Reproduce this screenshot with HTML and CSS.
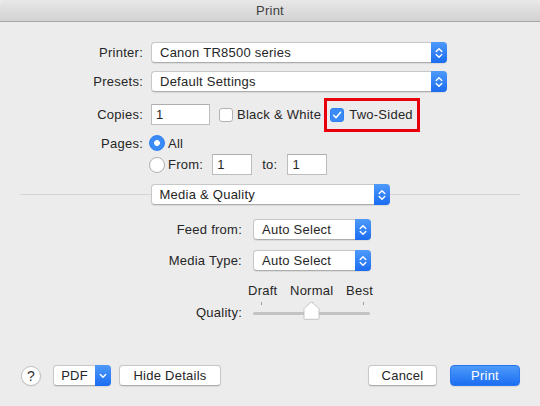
FILE: index.html
```html
<!DOCTYPE html>
<html>
<head>
<meta charset="utf-8">
<link rel="stylesheet" href="styles.css">
</head>
<body>
<div class="window">
  <div class="titlebar">Print</div>
  <div class="content">
    <div class="row">
      <div class="label">Printer:</div>
      <div class="popup w-wide"><span class="val">Canon TR8500 series</span><span class="step"><svg width="8" height="12" viewBox="0 0 8 12"><path d="M1.2 4.6 L4 1.8 L6.8 4.6 M1.2 7.4 L4 10.2 L6.8 7.4" fill="none" stroke="#fff" stroke-width="1.4" stroke-linecap="round" stroke-linejoin="round"/></svg></span></div>
    </div>
    <div class="row mt8">
      <div class="label">Presets:</div>
      <div class="popup w-wide"><span class="val">Default Settings</span><span class="step"><svg width="8" height="12" viewBox="0 0 8 12"><path d="M1.2 4.6 L4 1.8 L6.8 4.6 M1.2 7.4 L4 10.2 L6.8 7.4" fill="none" stroke="#fff" stroke-width="1.4" stroke-linecap="round" stroke-linejoin="round"/></svg></span></div>
    </div>
    <div class="row mt12">
      <div class="label">Copies:</div>
      <div class="field w-copies">1</div>
      <span class="cb"></span><span>Black &amp; White</span>
      <div class="hl">
        <span class="cb on"><svg width="12" height="12" viewBox="0 0 12 12"><path d="M2.6 6.2 L5 8.7 L9.6 3.2" fill="none" stroke="#fff" stroke-width="1.5" stroke-linecap="round" stroke-linejoin="round"/></svg></span><span>Two-Sided</span>
      </div>
    </div>
    <div class="row pages mt8">
      <div class="label">Pages:</div>
      <span class="radio on"></span><span>All</span>
    </div>
    <div class="row mt1">
      <div class="label"></div>
      <span class="radio"></span><span>From:</span>
      <div class="field w-small from">1</div>
      <span class="to">to:</span>
      <div class="field w-small">1</div>
    </div>
    <div class="sep-row">
      <div class="line"></div>
      <div class="popup w-media"><span class="val">Media &amp; Quality</span><span class="step"><svg width="8" height="12" viewBox="0 0 8 12"><path d="M1.2 4.6 L4 1.8 L6.8 4.6 M1.2 7.4 L4 10.2 L6.8 7.4" fill="none" stroke="#fff" stroke-width="1.4" stroke-linecap="round" stroke-linejoin="round"/></svg></span></div>
      <div class="line"></div>
    </div>
    <div class="row mt14">
      <div class="label2">Feed from:</div>
      <div class="popup w-auto"><span class="val">Auto Select</span><span class="step"><svg width="8" height="12" viewBox="0 0 8 12"><path d="M1.2 4.6 L4 1.8 L6.8 4.6 M1.2 7.4 L4 10.2 L6.8 7.4" fill="none" stroke="#fff" stroke-width="1.4" stroke-linecap="round" stroke-linejoin="round"/></svg></span></div>
    </div>
    <div class="row mt10">
      <div class="label2">Media Type:</div>
      <div class="popup w-auto"><span class="val">Auto Select</span><span class="step"><svg width="8" height="12" viewBox="0 0 8 12"><path d="M1.2 4.6 L4 1.8 L6.8 4.6 M1.2 7.4 L4 10.2 L6.8 7.4" fill="none" stroke="#fff" stroke-width="1.4" stroke-linecap="round" stroke-linejoin="round"/></svg></span></div>
    </div>
    <div class="quality">
      <div class="label2 qlabel">Quality:</div>
      <div class="slider">
        <div class="marks"><span>Draft</span><span>Normal</span><span>Best</span></div>
        <div class="track-area">
          <span class="tick t1"></span><span class="tick t2"></span><span class="tick t3"></span>
          <div class="track"></div>
          <svg class="knob" width="19" height="19" viewBox="0 0 19 19"><path d="M2 17.5 L2 8.2 Q2 7.4 2.6 6.9 L8.8 1.4 Q9.5 0.9 10.2 1.4 L16.4 6.9 Q17 7.4 17 8.2 L17 17.5 Q17 18.3 16.2 18.3 L2.8 18.3 Q2 18.3 2 17.5 Z" fill="#fff" stroke="#b9b9b9" stroke-width="0.8"/></svg>
        </div>
      </div>
    </div>
  </div>
  <div class="footer">
    <div class="help">?</div>
    <div class="btn pdf"><span class="pdf-text">PDF</span><span class="pdf-arrow"><svg width="8" height="6" viewBox="0 0 8 6"><path d="M1.3 1.5 L4 4.2 L6.7 1.5" fill="none" stroke="#fff" stroke-width="1.4" stroke-linecap="round" stroke-linejoin="round"/></svg></span></div>
    <div class="btn hide">Hide Details</div>
    <div class="spacer"></div>
    <div class="btn cancel">Cancel</div>
    <div class="btn print">Print</div>
  </div>
</div>
</body>
</html>
```
FILE: styles.css
```css
html, body {
  margin: 0;
  padding: 0;
}
body {
  font-family: "Liberation Sans", Arial, sans-serif;
  font-size: 13px;
  letter-spacing: 0.25px;
  color: #262626;
  background: #ececec;
}
.window {
  width: 540px;
  height: 406px;
  display: flex;
  flex-direction: column;
  background: #ececec;
  overflow: hidden;
}
.titlebar {
  height: 21px;
  flex: none;
  border-bottom: 1px solid #a6a6a6;
  background: linear-gradient(#e8e8e8, #d2d2d2);
  border-radius: 5px 5px 0 0;
  display: flex;
  align-items: center;
  justify-content: center;
  color: #404040;
  font-size: 13px;
}
.content {
  padding-top: 20px;
}
.row {
  display: flex;
  align-items: center;
  height: 21px;
  white-space: nowrap;
}
.mt1 { margin-top: 1px; }
.mt8 { margin-top: 8px; }
.mt10 { margin-top: 10px; }
.mt12 { margin-top: 12px; }
.mt14 { margin-top: 14px; }
.label {
  width: 143px;
  flex: none;
  text-align: right;
  margin-right: 8px;
}
.label2 {
  width: 242px;
  flex: none;
  text-align: right;
  margin-right: 11px;
}
.popup {
  display: flex;
  height: 21px;
  box-sizing: border-box;
  background: #fff;
  border: 1px solid #c8c8c8;
  border-bottom-color: #adadad;
  border-radius: 4px;
  box-shadow: 0 0.5px 1px rgba(0, 0, 0, 0.08);
  flex: none;
}
.popup .val {
  flex: 1;
  padding-left: 8px;
  line-height: 19px;
  white-space: nowrap;
}
.popup .step {
  width: 16px;
  margin: -1px -1px -1px 0;
  background: linear-gradient(#4d9af9, #1b6cf2);
  border-radius: 0 4px 4px 0;
  display: flex;
  align-items: center;
  justify-content: center;
}
.w-wide { width: 296px; }
.w-media { width: 239px; }
.w-auto { width: 118px; }
.field {
  height: 21px;
  box-sizing: border-box;
  border: 1px solid #bdbdbd;
  border-top-color: #aeaeae;
  background: #fff;
  padding-left: 4px;
  line-height: 19px;
  flex: none;
}
.w-copies { width: 59px; margin-right: 9px; }
.w-small { width: 40px; }
.from { margin-left: 9px; }
.to { margin: 0 10px; }
.cb {
  width: 14px;
  height: 14px;
  box-sizing: border-box;
  border: 1px solid #b3b3b3;
  border-radius: 3px;
  background: #fff;
  margin-right: 4px;
  flex: none;
  display: flex;
  align-items: center;
  justify-content: center;
}
.cb.on {
  background: #3a8bf7;
  border-color: #2f80f2;
  margin-right: 5px;
}
.hl {
  display: flex;
  align-items: center;
  box-sizing: border-box;
  height: 34px;
  border: 3px solid #e8000d;
  padding: 0 4px 0 3px;
  margin-left: 3px;
  flex: none;
}
.pages { height: 20px; }
.radio {
  width: 16px;
  height: 16px;
  box-sizing: border-box;
  border-radius: 50%;
  border: 1px solid #b0b0b0;
  background: #fff;
  margin-left: -2px;
  margin-right: 3px;
  flex: none;
}
.radio.on {
  border-color: #2f80f2;
  background: radial-gradient(circle, #fff 0 2.6px, #3a8bf7 3.2px);
}
.sep-row {
  display: flex;
  align-items: center;
  height: 21px;
  margin-top: 9px;
  padding: 0 20px;
}
.line {
  flex: 1;
  height: 1px;
  background: #d4d4d4;
}
.quality {
  display: flex;
  align-items: flex-end;
  margin-top: 12px;
}
.qlabel {
  line-height: 18px;
}
.slider {
  width: 117px;
  flex: none;
}
.marks {
  display: flex;
  justify-content: space-between;
  margin: 0 -3px 0 -5px;
  line-height: 16px;
}
.track-area {
  position: relative;
  box-sizing: border-box;
  height: 20px;
  padding-top: 10px;
  margin-top: 3px;
}
.track {
  height: 3px;
  border-radius: 2px;
  background: #c3c3c3;
}
.tick {
  position: absolute;
  top: 0;
  width: 1px;
  height: 3px;
  background: #9c9c9c;
}
.t1 { left: 8px; }
.t2 { left: 59px; }
.t3 { left: 110px; }
.knob {
  position: absolute;
  left: 49px;
  top: -1px;
}
.footer {
  margin-top: auto;
  display: flex;
  align-items: center;
  padding: 0 20px 20px 21px;
}
.help {
  width: 20px;
  height: 20px;
  box-sizing: border-box;
  border-radius: 50%;
  border: 1px solid #c2c2c2;
  background: #fff;
  box-shadow: 0 0.5px 1px rgba(0, 0, 0, 0.1);
  display: flex;
  align-items: center;
  justify-content: center;
  font-size: 14px;
  letter-spacing: 0;
  color: #333;
  margin-right: 12px;
}
.btn {
  height: 21px;
  box-sizing: border-box;
  border: 1px solid #c8c8c8;
  border-bottom-color: #adadad;
  border-radius: 4px;
  background: #fff;
  box-shadow: 0 0.5px 1px rgba(0, 0, 0, 0.08);
  display: flex;
  align-items: center;
  justify-content: center;
  flex: none;
}
.pdf {
  width: 58px;
  margin-right: 8px;
  justify-content: flex-start;
}
.pdf-text {
  flex: 1;
  text-align: center;
}
.pdf-arrow {
  width: 16px;
  align-self: stretch;
  margin: -1px -1px -1px 0;
  border-radius: 0 4px 4px 0;
  background: linear-gradient(#4d9af9, #1b6cf2);
  display: flex;
  align-items: center;
  justify-content: center;
}
.hide { width: 102px; }
.spacer { flex: 1; }
.cancel { width: 69px; margin-right: 13px; }
.print {
  width: 70px;
  border-color: #2a78ef;
  background: linear-gradient(#4d9af9, #1c6ef2);
  color: #fff;
}
```
